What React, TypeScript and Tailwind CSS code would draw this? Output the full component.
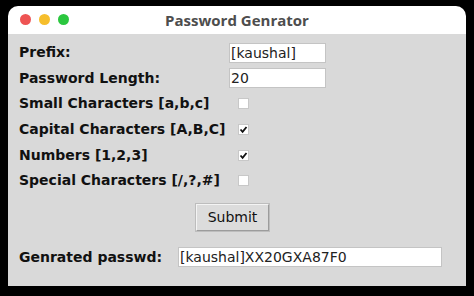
import React from "react";

function Check({ checked }: { checked?: boolean }) {
  return (
    <div className="ml-[9px] w-[11px] h-[11px] bg-white border border-[#c8c8c8] flex items-center justify-center">
      {checked && (
        <svg width="9" height="9" viewBox="0 0 9 9">
          <path d="M1.5 4.5 L3.6 6.8 L7.5 2" fill="none" stroke="#111" strokeWidth="1.8" />
        </svg>
      )}
    </div>
  );
}

function Entry({ value, w }: { value: string; w: string }) {
  return (
    <div className={`${w} h-[20px] bg-white border border-[#c4c4c4] flex items-center px-[1px] text-[14px] text-[#222] leading-none`}>
      {value}
    </div>
  );
}

export default function App() {
  const rows: { label: string; kind: "entry" | "check"; value?: string; checked?: boolean }[] = [
    { label: "Prefix:", kind: "entry", value: "[kaushal]" },
    { label: "Password Length:", kind: "entry", value: "20" },
    { label: "Small Characters [a,b,c]", kind: "check", checked: false },
    { label: "Capital Characters [A,B,C]", kind: "check", checked: true },
    { label: "Numbers [1,2,3]", kind: "check", checked: true },
    { label: "Special Characters [/,?,#]", kind: "check", checked: false },
  ];

  return (
    <div className="w-[474px] h-[296px] bg-black pt-[6px] px-[8px]" style={{ fontFamily: '"DejaVu Sans", sans-serif' }}>
      <div className="w-[458px] h-[280px] flex flex-col">
        {/* Title bar */}
        <div className="h-[28px] bg-white rounded-t-[10px] relative flex items-center justify-center">
          <div className="absolute left-[12px] top-[8px] flex gap-[8px]">
            <span className="w-[11px] h-[11px] rounded-full bg-[#ee5453]" />
            <span className="w-[11px] h-[11px] rounded-full bg-[#f6be2c]" />
            <span className="w-[11px] h-[11px] rounded-full bg-[#2bc73f]" />
          </div>
          <span className="text-[15px] font-bold text-[#4d4d4d]" style={{ fontFamily: '"Open Sans", "Noto Sans", sans-serif' }}>
            Password Genrator
          </span>
        </div>

        {/* Body */}
        <div className="flex-1 bg-[#d9d9d9] pl-[11px] pt-[6px]">
          {rows.map((r) => (
            <div key={r.label} className="h-[25.6px] flex items-center">
              <div className="w-[210px] text-[14px] font-bold text-[#111]">{r.label}</div>
              {r.kind === "entry" ? <Entry value={r.value || ""} w="w-[97px]" /> : <Check checked={r.checked} />}
            </div>
          ))}

          <div className="flex mt-[10px]">
            <button className="ml-[177px] w-[73px] h-[27px] bg-[#dcdcdc] border border-[#f4f4f4] border-r-[#9c9c9c] border-b-[#9c9c9c] text-[14px] text-[#111] shadow-[0_0_0_1px_#bdbdbd]">
              Submit
            </button>
          </div>

          <div className="flex items-center mt-[16px]">
            <div className="w-[159px] text-[14px] font-bold text-[#111]">Genrated passwd:</div>
            <Entry value="[kaushal]XX20GXA87F0" w="w-[264px]" />
          </div>
        </div>
      </div>
    </div>
  );
}
